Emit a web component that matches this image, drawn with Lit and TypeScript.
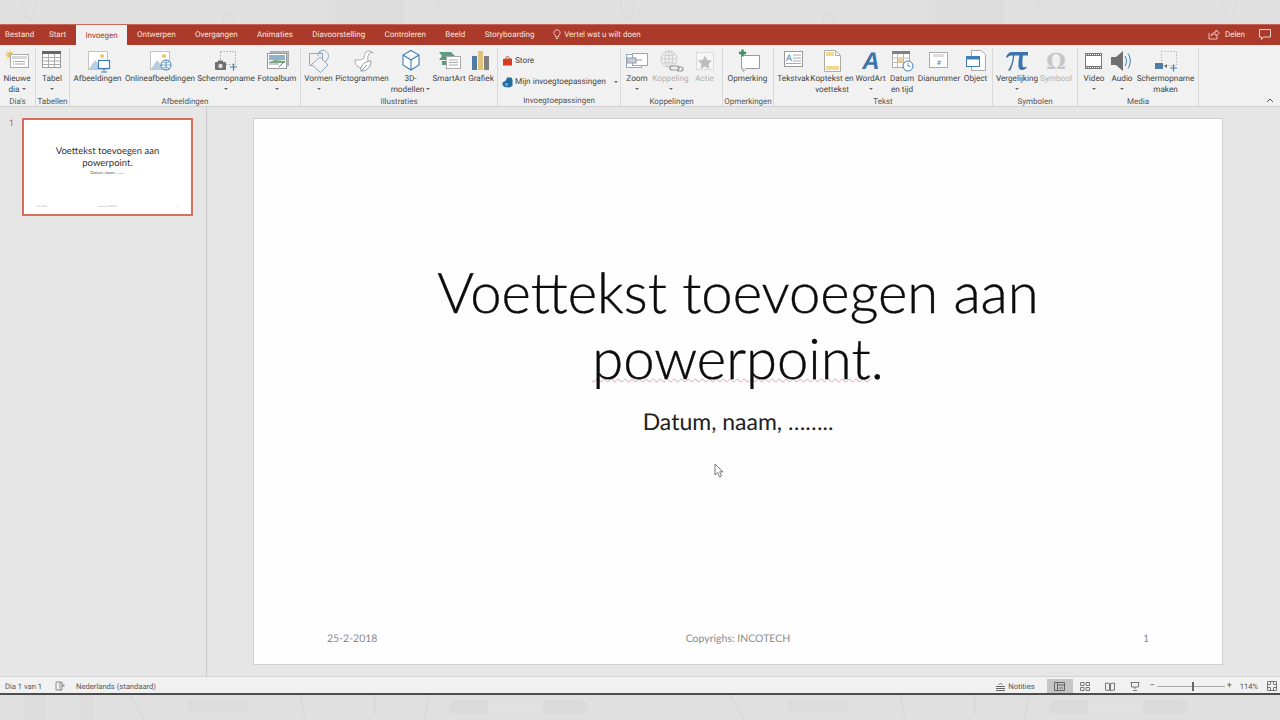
import { LitElement, html, css, svg } from "lit";
import { customElement } from "lit/decorators.js";

const B = "#3f7fb5";
const picture = svg`
  <rect x="5.5" y="3.5" width="19" height="18" fill="#fff" stroke="#c4c4c4"/>
  <path d="M6 21l6-9 5 6 2-2 5 5z" fill="#b9cde0"/>
  <circle cx="19" cy="8" r="2" fill="#e8c36a"/>`;

const icons: Record<string, unknown> = {
  nieuw: svg`
    <circle cx="8" cy="7" r="3" fill="#f0c659"/><path d="M8 1.5v11M2.5 7h11M4 3l8 8M12 3l-8 8" stroke="#f0c659" stroke-width=".8"/>
    <rect x="8.5" y="6.5" width="18" height="13" fill="#fff" stroke="#aaa"/><rect x="10" y="8" width="15" height="3" fill="#d8d8d8"/>
    <path d="M13 13.5h10M13 16h10" stroke="#aaa"/><path d="M11 13.5h1M11 16h1" stroke="#888"/>`,
  tabel: svg`
    <rect x="5.5" y="3.5" width="18" height="16" fill="#fff" stroke="#999"/><rect x="5" y="3" width="19" height="3" fill="#666"/>
    <path d="M5.500 9.500h18M5.500 13h18M5.500 16.500h18M11.500 6v13M17.500 6v13" stroke="#aaa" fill="none"/>`,
  afb: svg`${picture}<rect x="15.500" y="12.500" width="11" height="8" fill="#fff" stroke=${B} stroke-width="1.200"/><path d="M21 21v2.500M18 24h6" stroke=${B}/>`,
  online: svg`${picture}<circle cx="21" cy="17" r="5" fill="#fff" stroke=${B}/><path d="M16 17h10M21 12v10M18 13.500c2 2 4 2 6 0M18 20.500c2-2 4-2 6 0" stroke=${B} stroke-width=".7" fill="none"/>`,
  scherm: svg`
    <rect x="9.500" y="3.500" width="15" height="13" fill="none" stroke="#aaa" stroke-dasharray="1.500 1.500"/>
    <rect x="4" y="14" width="11" height="8" rx="1" fill="#6f6f6f"/><rect x="7" y="12.500" width="5" height="2" fill="#6f6f6f"/><circle cx="9.500" cy="18" r="2.200" fill="#ddd"/>
    <path d="M19 19h7M22.500 15.500v7" stroke=${B} stroke-width="1.200"/>`,
  foto: svg`
    <rect x="8.500" y="3.500" width="18" height="14" fill="#bbb" stroke="#aaa"/><rect x="5.500" y="5.500" width="19" height="15" fill="#fff" stroke="#999"/>
    <rect x="7" y="7" width="16" height="5" fill="#8fb2cc"/><path d="M7 14l6-2 10 1v2H7z" fill="#7ea686"/><path d="M7 16h10" stroke="#999"/><path d="M17 19l6-6" stroke="#777"/>`,
  vormen: svg`
    <g fill="none" stroke="#8fa8c4">
      <path d="M5.500 5.500h13v12h-13z"/>
      <path d="M14 8c-1-4 4-7 7.500-5 3 1.700 4 5 2 8l-3.500 5"/>
      <path d="M16 9l8 8-7.500 7.500-9-8z" fill="#f1f1f1"/>
      <path d="M15 4c2 0 3 1 3.500 3"/>
    </g>`,
  picto: svg`
    <path d="M8 12c0 5 3 8 7 8s6-2 6-6c0-3-1-5 1-8 1-2 3-2 4-1-1-2-5-3-7-1-2 2-1 5-3 7-2 1-5 1-8 1z" fill="#fff" stroke="#aaa"/>
    <path d="M14 23c-1-5 3-10 10-10 0 6-4 10-10 10z" fill="#fff" stroke="#8aa0a0"/><path d="M14 23l6-6" stroke="#8aa0a0"/>`,
  model: svg`<path d="M15 2.500l8 4.500v10l-8 5-8-5V7z M7 7l8 5 8-5 M15 12v10" fill="#fff" stroke=${B} stroke-width="1.100"/>`,
  smart: svg`
    <path d="M5 4h12l4 4-4 4H5l3-4z" fill="#5e9a80"/><path d="M8 13h8v4H8z" fill="#5e9a80"/>
    <rect x="12.500" y="8.500" width="14" height="12" fill="#fff" stroke="#aaa"/><path d="M15 12h9M15 14.500h9M15 17h9" stroke="#aaa"/>`,
  graf: svg`<rect x="6" y="8" width="5" height="14" fill="#4f7ba3"/><rect x="12" y="3" width="5" height="19" fill="#e0c27a"/><rect x="18" y="8" width="5" height="14" fill="#808080"/>`,
  zoom: svg`
    <rect x="4.500" y="6.500" width="15" height="13" fill="#fff" stroke="#8fa8c4"/><rect x="10.500" y="5.500" width="15" height="12" fill="#fff" stroke="#8fa8c4"/>
    <rect x="5" y="10" width="9" height="5" fill="#c3cfda" stroke="#999"/><path d="M14 12h6" stroke="#999"/>`,
  koppel: svg`
    <g stroke="#ccc" fill="none"><circle cx="13" cy="11" r="8"/><path d="M5 11h16M13 3v16M7 6c4 2 8 2 12 0M7 16c4-2 8-2 12 0"/><ellipse cx="13" cy="11" rx="4" ry="8"/></g>
    <path d="M16 18h5a2 2 0 010 4h-5a2 2 0 010-4zM21 19h4a2 2 0 010 4h-4" fill="none" stroke="#999" stroke-width="1.200"/>`,
  actie: svg`
    <rect x="6.500" y="4.500" width="17" height="17" fill="#f6f6f6" stroke="#d0d0d0" stroke-dasharray="2 1"/>
    <path d="M15 7.500l2.200 4.500 4.800.6-3.500 3.400.9 4.900-4.400-2.400-4.400 2.400.9-4.900L8 12.600l4.800-.6z" fill="#bdbdbd"/>`,
  opm: svg`
    <path d="M8.500 7.500h18v13H13l-3 3v-3H8.500z" fill="#fff" stroke="#999"/>
    <path d="M6 5h7M9.500 1.500v7" stroke="#3e8f5f" stroke-width="2.400"/>`,
  tekstvak: svg`
    <rect x="5.500" y="3.500" width="18" height="15" fill="#fff" stroke="#999"/>
    <text x="7" y="12.500" font-size="9" font-family="Liberation Sans" fill="#3f7fb5">A</text>
    <path d="M14 7h8M14 10h8M14 13h8M7 15.500h15" stroke="#aaa"/>`,
  kop: svg`
    <path d="M7.500 2.500h11l5 5v16h-16z" fill="#fff" stroke="#aaa"/><path d="M18.500 2.500v5h5" fill="none" stroke="#aaa"/>
    <rect x="9" y="4" width="8" height="4" fill="#f0d98f"/><rect x="9" y="18" width="13" height="4" fill="#f0d98f"/>`,
  word: svg`
    <text x="15" y="21" text-anchor="middle" font-family="Liberation Sans" font-style="italic" font-weight="700" font-size="24" fill="#3b73ad">A</text>`,
  datum: svg`
    <rect x="5.500" y="3.500" width="17" height="16" fill="#fff" stroke="#aaa"/><rect x="5" y="3" width="18" height="3" fill="#808080"/>
    <path d="M5.500 10h17M5.500 14.500h17M10.500 6v13M16.500 6v13" stroke="#bbb"/><rect x="11" y="10.500" width="5" height="4" fill="#f2cc8a"/>
    <circle cx="21" cy="18" r="5" fill="#fff" stroke=${B}/><path d="M21 15v3.200h2.500" fill="none" stroke=${B} stroke-width=".8"/>`,
  dianr: svg`
    <rect x="5.500" y="4.500" width="18" height="15" fill="#fff" stroke="#aaa"/><rect x="9" y="6" width="11" height="3" fill="#ddd"/>
    <text x="15" y="17" text-anchor="middle" font-size="7" font-family="Liberation Sans" font-weight="700" font-style="italic" fill="#4a7fb0">#</text>`,
  object: svg`
    <path d="M10.500 2.500h10l4 4v16h-14z" fill="#fff" stroke="#aaa"/>
    <rect x="5.500" y="8.500" width="13" height="10" fill="#fff" stroke=${B}/><rect x="5.500" y="8.500" width="13" height="3" fill=${B}/>`,
  pi: svg`<path d="M4 9c1-3 3-5 6-5h16v3.500h-5c-.5 4-.8 7-.5 10 .2 2 1.800 2.500 3.500 1l.8 1c-2.500 3.500-8 3.500-8.300-1-.2-3 .2-7 .8-11h-5c-.5 6-2 11-4 15H6c3-4 4.500-9 5-15H9.500c-2 0-3.500 1-4.500 2.500z" fill="#3b73ad"/>`,
  omega: svg`<text x="15" y="21" text-anchor="middle" font-family="DejaVu Serif" font-size="22" font-weight="700" fill="#c6c6c6">Ω</text>`,
  video: svg`
    <rect x="6.500" y="5.500" width="16" height="15" fill="#fff" stroke="#777"/><rect x="6" y="5" width="17" height="3" fill="#777"/><rect x="6" y="18" width="17" height="3" fill="#777"/>
    <path d="M7 6.500h15M7 19.500h15" stroke="#fff" stroke-dasharray="1 1"/>`,
  audio: svg`
    <path d="M4 9h5l7-6v20l-7-6H4z" fill="#707070"/>
    <path d="M18 8c2 3 2 7 0 10M21 5.500c3 4 3 11 0 15" fill="none" stroke=${B}/>`,
  opname: svg`
    <rect x="10.500" y="3.500" width="15" height="14" fill="none" stroke="#bbb" stroke-dasharray="1.500 1.500"/>
    <rect x="4" y="15" width="8" height="6" fill="#4e7ea8"/><path d="M13 18l3-2v4z" fill="#666"/><path d="M19 20h7M22.500 16.500v7" stroke=${B} stroke-width="1.200"/>`,
};

type Btn = { w: number; l: string; l2?: string; i: string; c?: boolean; off?: boolean; c2?: boolean };
type Group = { w: number; pad?: number; label: string; btns?: Btn[]; addins?: boolean };
const groups: Group[] = [
  { w: 36, label: "Dia's", btns: [{ w: 34, l: "Nieuwe", l2: "dia", i: "nieuw", c2: true }] },
  { w: 34, pad: 0, label: "Tabellen", btns: [{ w: 32, l: "Tabel", i: "tabel", c: true }] },
  { w: 231, pad: 1, label: "Afbeeldingen", btns: [
    { w: 53, l: "Afbeeldingen", i: "afb" }, { w: 72, l: "Onlineafbeeldingen", i: "online" },
    { w: 60, l: "Schermopname", i: "scherm", c: true }, { w: 42, l: "Fotoalbum", i: "foto", c: true }] },
  { w: 197, pad: 2, label: "Illustraties", btns: [
    { w: 31, l: "Vormen", i: "vormen", c: true }, { w: 56, l: "Pictogrammen", i: "picto" },
    { w: 41, l: "3D-", l2: "modellen", i: "model", c2: true }, { w: 36, l: "SmartArt", i: "smart" }, { w: 28, l: "Grafiek", i: "graf" }] },
  { w: 123, label: "Invoegtoepassingen", addins: true },
  { w: 102, pad: 1, label: "Koppelingen", btns: [
    { w: 30, l: "Zoom", i: "zoom", c: true }, { w: 37, l: "Koppeling", i: "koppel", c: true, off: true }, { w: 31, l: "Actie", i: "actie", off: true }] },
  { w: 51, label: "Opmerkingen", btns: [{ w: 49, l: "Opmerking", i: "opm" }] },
  { w: 219, pad: 3, label: "Tekst", btns: [
    { w: 33, l: "Tekstvak", i: "tekstvak" }, { w: 44, l: "Koptekst en", l2: "voettekst", i: "kop" },
    { w: 33, l: "WordArt", i: "word", c: true }, { w: 30, l: "Datum", l2: "en tijd", i: "datum" },
    { w: 44, l: "Dianummer", i: "dianr" }, { w: 29, l: "Object", i: "object" }] },
  { w: 85, pad: 2, label: "Symbolen", btns: [
    { w: 44, l: "Vergelijking", i: "pi", c: true }, { w: 34, l: "Symbool", i: "omega", off: true }] },
  { w: 121, pad: 2, label: "Media", btns: [
    { w: 28, l: "Video", i: "video", c: true }, { w: 28, l: "Audio", i: "audio", c: true },
    { w: 59, l: "Schermopname", l2: "maken", i: "opname" }] },
];
const tabs = ["Bestand", "Start", "Invoegen", "Ontwerpen", "Overgangen", "Animaties", "Diavoorstelling", "Controleren", "Beeld", "Storyboarding"];

@customElement("app-root")
export class AppRoot extends LitElement {
  static styles = css`
    :host { display: block; width: 1280px; height: 720px; overflow: hidden; font-family: Roboto, "Open Sans", sans-serif; color: #444; position: relative; text-rendering: geometricPrecision; }
    .app { display: flex; flex-direction: column; height: 720px; }
    .strip { background: #e0e0e0; position: relative; overflow: hidden; }
    .strip svg { position: absolute; left: 0; top: 0; }
    .top { height: 24px; flex: none; }
    .bottom { height: 25px; flex: none; }
    .tabs { height: 21px; flex: none; background: #ab3a2a; display: flex; align-items: stretch; color: #f6e3df; font-size: 8px; box-shadow: inset 0 1px 0 #c4675a; }
    .tab { padding: 0 9.700px; display: flex; align-items: center; }
    .tab.first { padding: 0 5px 0 5px; }
    .tab.on { background: #f1f1f1; color: #ab3a2a; margin-top: 1px; padding: 0 9.500px; }
    .tell { display: flex; align-items: center; gap: 3px; margin-left: 9px; }
    .share { margin-left: auto; display: flex; align-items: center; padding-right: 9px; }
    .share span { margin: 0 14px 0 5px; }
    .ribbon { height: 62px; flex: none; background: #f1f1f1; display: flex; padding-top: 3px; box-sizing: border-box; border-bottom: 1px solid #d2d2d2; }
    .group { flex: none; height: 58px; box-sizing: border-box; border-right: 1px solid #d9d9d9; display: flex; flex-direction: column; }
    .btns { height: 47px; display: flex; flex: none; }
    .glabel { text-align: center; font-size: 8px; line-height: 10px; color: #555; white-space: nowrap; margin-top: 2px; }
    .btn { flex: none; display: flex; flex-direction: column; align-items: center; font-size: 8.200px; line-height: 11px; white-space: nowrap; text-align: center; }
    .btn svg { flex: none; }
    .btn.off { color: #b0b0b0; }
    .caret { display: block; width: 0; height: 0; border: 2px solid transparent; border-top: 2.500px solid #666; border-bottom: 0; margin: 3px auto 0; }
    .caret.in { display: inline-block; margin: 0 0 1px 2px; vertical-align: middle; }
    .addins { height: 47px; display: flex; flex-direction: column; padding: 6px 0 0 4px; font-size: 8.200px; gap: 7px; }
    .row { display: flex; align-items: center; gap: 2px; height: 14px; white-space: nowrap; }
    .row .caret { margin: 0 0 0 6px; }
    .rest { flex: 1; display: flex; justify-content: flex-end; align-items: flex-end; padding: 0 6px 3px 0; }
    .main { flex: 1; display: flex; background: #e6e6e6; min-height: 0; border-bottom: 1px solid #d4d4d4; }
    .side { width: 207px; flex: none; box-sizing: border-box; border-right: 1px solid #c9c9c9; display: flex; padding: 11px 0 0 9px; gap: 8px; align-items: flex-start; }
    .num { font-size: 9px; line-height: 11px; color: #c9604a; width: 5px; margin-top: 1px; }
    .thumb { width: 171px; height: 98px; box-sizing: border-box; border: 2px solid #d4705c; background: #fff; display: flex; flex-direction: column; align-items: center; font-family: Lato, "Open Sans", sans-serif; padding-top: 26px; }
    .thumb .t { font-size: 9.500px; line-height: 11.500px; text-align: center; color: #333; }
    .thumb .s { font-size: 4.100px; line-height: 5px; margin-top: 1px; color: #555; }
    .tfoot { margin-top: auto; width: 100%; box-sizing: border-box; padding: 0 13px 5px; display: grid; grid-template-columns: 1fr auto 1fr; font-size: 2px; line-height: 3px; color: #999; }
    .tfoot span:last-child, .foot span:last-child { text-align: right; }
    .stage { flex: 1; padding: 11px 0 0 46px; }
    .slide { width: 970px; height: 547px; box-sizing: border-box; background: #fefefe; border: 1px solid #cfcfcf; display: flex; flex-direction: column; align-items: center; padding-top: 140px; font-family: Lato, "Open Sans", sans-serif; color: #0c0c0c; }
    .title { font-size: 56.200px; font-weight: 300; line-height: 66px; text-align: center; white-space: nowrap; -webkit-text-stroke: 0.4px #0c0c0c; }
    .wavy { text-decoration: underline wavy #e2a0a8 1px; text-underline-offset: -1px; text-decoration-skip-ink: none; }
    .sub { font-size: 23px; line-height: 28px; margin-top: 16px; color: #222; }
    .foot { margin-top: auto; width: 100%; box-sizing: border-box; display: grid; grid-template-columns: 1fr auto 1fr; padding: 0 73px 18px 73px; font-size: 10.500px; line-height: 14px; color: #8a8a8a; }
    .status { flex: none; box-sizing: border-box; background: #f1f1f1; border-bottom: 2px solid #4d4d4d; height: 18px; padding-top: 2px; display: flex; align-items: center; font-size: 7.600px; color: #555; padding-left: 5px; }
    .status .sp { margin: 0 11px 0 13px; display: flex; }
    .sright { margin-left: auto; display: flex; align-items: center; height: 100%; }
    .v { width: 25px; height: 100%; display: flex; align-items: center; justify-content: center; }
    .v.on { width: 26px; background: #c6c6c6; }
    .v.last { margin-right: 2px; }
    .notes { display: flex; align-items: center; gap: 3px; margin-right: 12px; }
    .slider { width: 68px; height: 1px; background: #aaa; margin: 0 2px; position: relative; }
    .slider i { position: absolute; left: 35px; top: -4px; width: 2px; height: 9px; background: #666; }
    .pm { font-size: 9px; line-height: 10px; color: #555; width: 5px; text-align: center; }
    .pct { margin: 0 9px 0 8px; }
    .fit { margin-right: 3px; }
    .cursor { position: absolute; left: 714px; top: 463px; }
  `;

  private btn(b: Btn) {
    return html`<div class="btn ${b.off ? "off" : ""}" style="width:${b.w}px">
      <svg width="30" height="26" viewBox="0 0 30 26">${icons[b.i]}</svg>
      <div>${b.l}</div>
      ${b.l2 ? html`<div>${b.l2}${b.c2 ? html`<span class="caret in"></span>` : ""}</div>` : ""}
      ${b.c ? html`<span class="caret"></span>` : ""}
    </div>`;
  }

  render() {
    return html`<div class="app">
      <div class="strip top">
        <svg width="1280" height="24" fill="none" stroke="#dcdcdc" stroke-width="2">
          <rect x="335" y="0" width="69" height="24" fill="#dcdcdc" stroke="none"/><rect x="935" y="0" width="69" height="24" fill="#dcdcdc" stroke="none"/>
          <path d="M22 0c1 10 4 18 9 20 3-5 4-12 6-20M620 0c1 10 4 18 9 20 3-5 4-12 6-20M1222 0c1 10 4 18 9 20 3-5 4-12 6-20M440 0c-3 8-6 14-9 19M1040 0c-3 8-6 14-9 19M222 24c2-8 4-12 6-12 3 0 4 6 8 12M822 24c2-8 4-12 6-12 3 0 4 6 8 12"/>
        </svg>
      </div>
      <div class="tabs">
        ${tabs.map((t, i) => html`<div class="tab ${i === 0 ? "first" : ""} ${t === "Invoegen" ? "on" : ""}">${t}</div>`)}
        <div class="tell">
          <svg width="8" height="11" viewBox="0 0 8 11" fill="none" stroke="#f6e3df" stroke-width=".8"><path d="M4 .8a3 3 0 00-2 5.300c.5.500.6 1.200.6 1.900h2.800c0-.7.100-1.400.6-1.900A3 3 0 004 .8zM2.800 9.500h2.400"/></svg>
          Vertel wat u wilt doen
        </div>
        <div class="share">
          <svg width="12" height="11" viewBox="0 0 12 11" fill="none" stroke="#f6e3df" stroke-width=".8"><path d="M1 4v6h8V7M3 7c.5-2.500 2.500-4 5-4V1l3.500 3L8 7V5c-2 0-4 .5-5 2z"/></svg>
          <span>Delen</span>
          <svg width="12" height="11" viewBox="0 0 12 11" fill="none" stroke="#f6e3df" stroke-width=".9"><path d="M.5.500h11v7.500H4.500L2.500 10.500V8h-2z"/></svg>
        </div>
      </div>
      <div class="ribbon">
        ${groups.map((g) => html`<div class="group" style="width:${g.w}px">
          ${g.addins
            ? html`<div class="addins">
                <div class="row"><svg width="11" height="11" viewBox="0 0 11 11"><path d="M1 3l9-.5v7H1z" fill="#d83b1f"/><path d="M3.500 3c0-3 4-3 4-.5" fill="none" stroke="#d83b1f"/></svg>Store</div>
                <div class="row"><svg width="11" height="11" viewBox="0 0 11 11"><path d="M.5 5.500L4 3.500 5 .5h4.500L10.500 3v6L7 10.500 2.500 10 .5 8z" fill="#1f6d9e"/><path d="M3 6h3v3H3z" fill="#5fa5d2"/></svg>Mijn invoegtoepassingen<span class="caret"></span></div>
              </div>`
            : html`<div class="btns" style="padding-left:${g.pad ?? 0}px">${g.btns!.map((b) => this.btn(b))}</div>`}
          <div class="glabel">${g.label}</div>
        </div>`)}
        <div class="rest">
          <svg width="8" height="5" viewBox="0 0 8 5" fill="none" stroke="#555"><path d="M1 4l3-3 3 3"/></svg>
        </div>
      </div>
      <div class="main">
        <div class="side">
          <div class="num">1</div>
          <div class="thumb">
            <div class="t">Voettekst toevoegen aan<br />powerpoint.</div>
            <div class="s">Datum, naam, ……..</div>
            <div class="tfoot"><span>25-2-2018</span><span>Copyrighs: INCOTECH</span><span>1</span></div>
          </div>
        </div>
        <div class="stage">
          <div class="slide">
            <div class="title">Voettekst toevoegen aan<br /><span class="wavy">powerpoint</span>.</div>
            <div class="sub">Datum, naam, ……..</div>
            <div class="foot"><span>25-2-2018</span><span>Copyrighs: INCOTECH</span><span>1</span></div>
          </div>
        </div>
      </div>
      <div class="status">
        <span>Dia 1 van 1</span>
        <span class="sp"><svg width="10" height="10" viewBox="0 0 10 10" fill="none" stroke="#777" stroke-width=".8"><path d="M1 1h4v8H1zM5 1.500l2-.5v8l-2 .5M7 3l2.500 3M9.500 3L7 6"/></svg></span>
        <span>Nederlands (standaard)</span>
        <div class="sright">
          <div class="notes">
            <svg width="9" height="9" viewBox="0 0 9 9" fill="none" stroke="#666"><path d="M0 4.500h9M0 6.500h9M0 8.500h9"/><path d="M2.500 3l2-2 2 2" stroke-width=".8"/></svg>
            <span>Notities</span>
          </div>
          <div class="v on"><svg width="11" height="9" viewBox="0 0 11 9" fill="none" stroke="#666"><path d="M.5.500h10v8H.5zM3.500.5v8M3.500 3h7M5 6h4"/></svg></div>
          <div class="v"><svg width="10" height="9" viewBox="0 0 10 9" fill="none" stroke="#777"><path d="M.5.500h3.500v3H.5zM6 .5h3.500v3H6zM.5 5.500h3.500v3H.5zM6 5.500h3.500v3H6z"/></svg></div>
          <div class="v"><svg width="10" height="9" viewBox="0 0 10 9" fill="none" stroke="#777"><path d="M.5 1l4 .5v7l-4-.5zM9.500 1l-4 .5v7l4-.5z"/></svg></div>
          <div class="v last"><svg width="10" height="9" viewBox="0 0 10 9" fill="none" stroke="#777"><path d="M.5.500h9M1.500.5v4.500h7V.5M5 5v2M3 8.500h4"/></svg></div>
          <span class="pm">−</span>
          <div class="slider"><i></i></div>
          <span class="pm">+</span>
          <span class="pct">114%</span>
          <svg class="fit" width="10" height="10" viewBox="0 0 10 10" fill="none" stroke="#777"><path d="M.5.500h9v9h-9zM.5 3.500h3v-3M6.500.5v3h3M.5 6.500h3v3M9.500 6.500h-3v3"/></svg>
        </div>
      </div>
      <div class="strip bottom">
        <svg width="1280" height="25" fill="#dadada" stroke="none">
          <rect x="24" y="0" width="22" height="25" opacity=".5"/><rect x="80" y="0" width="14" height="25" opacity=".5"/>
          <rect x="188" y="5" width="60" height="12" opacity=".7"/><rect x="788" y="5" width="60" height="12" opacity=".7"/>
          <rect x="449" y="5" width="139" height="14" rx="7"/><rect x="1049" y="5" width="139" height="14" rx="7"/>
          <rect x="488" y="5" width="55" height="14" fill="#e1e1e1"/><rect x="1088" y="5" width="55" height="14" fill="#e1e1e1"/>
          <path d="M130 0l14 25M300 0l5 25M375 0v20M430 0l-6 25M730 0l14 25M900 0l5 25M975 0v20M1030 0l-6 25" stroke="#dadada" stroke-width="2" fill="none"/>
        </svg>
      </div>
      <svg class="cursor" width="10" height="15" viewBox="0 0 10 15"><path d="M1 1v11l2.600-2.400L5.500 14l2-1-1.900-4.200H9z" fill="#fff" stroke="#555" stroke-width=".8"/></svg>
    </div>`;
  }
}
